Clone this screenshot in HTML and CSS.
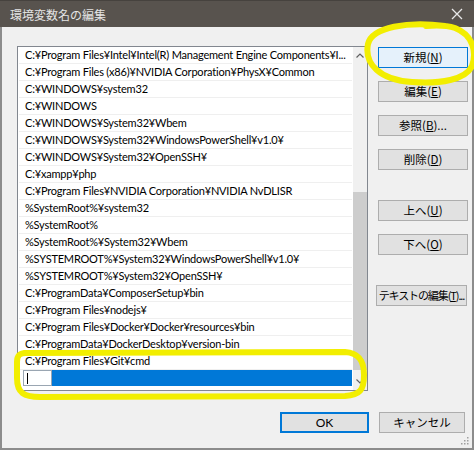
FILE: index.html
```html
<!DOCTYPE html>
<html lang="ja">
<head>
<meta charset="utf-8">
<title>環境変数名の編集</title>
<link rel="stylesheet" href="styles.css">
</head>
<body>
<div class="window">
  <div class="titlebar">
    <span class="title">環境変数名の編集</span>
    <svg class="close" width="12" height="12" viewBox="0 0 12 12"><path d="M1 1 L11 11 M11 1 L1 11" stroke="#e8e8e8" stroke-width="1.3" fill="none"/></svg>
  </div>
  <div class="content">
    <div class="main">
      <div class="listbox">
        <div class="rows">
          <div class="row">C:¥Program Files¥Intel¥Intel(R) Management Engine Components¥I...</div>
          <div class="row">C:¥Program Files (x86)¥NVIDIA Corporation¥PhysX¥Common</div>
          <div class="row">C:¥WINDOWS¥system32</div>
          <div class="row">C:¥WINDOWS</div>
          <div class="row">C:¥WINDOWS¥System32¥Wbem</div>
          <div class="row">C:¥WINDOWS¥System32¥WindowsPowerShell¥v1.0¥</div>
          <div class="row">C:¥WINDOWS¥System32¥OpenSSH¥</div>
          <div class="row">C:¥xampp¥php</div>
          <div class="row">C:¥Program Files¥NVIDIA Corporation¥NVIDIA NvDLISR</div>
          <div class="row">%SystemRoot%¥system32</div>
          <div class="row">%SystemRoot%</div>
          <div class="row">%SystemRoot%¥System32¥Wbem</div>
          <div class="row">%SYSTEMROOT%¥System32¥WindowsPowerShell¥v1.0¥</div>
          <div class="row">%SYSTEMROOT%¥System32¥OpenSSH¥</div>
          <div class="row">C:¥ProgramData¥ComposerSetup¥bin</div>
          <div class="row">C:¥Program Files¥nodejs¥</div>
          <div class="row">C:¥Program Files¥Docker¥Docker¥resources¥bin</div>
          <div class="row">C:¥ProgramData¥DockerDesktop¥version-bin</div>
          <div class="row">C:¥Program Files¥Git¥cmd</div>
          <div class="row selected"><span class="editbox"><span class="caret"></span></span></div>
        </div>
        <div class="scrollbar">
          <div class="arrow"><svg width="8" height="5" viewBox="0 0 8 5"><path d="M0.5 4.5 L4 1 L7.5 4.5" stroke="#606060" stroke-width="1.2" fill="none"/></svg></div>
          <div class="track"><div class="thumb"></div></div>
          <div class="arrow down"><svg width="8" height="5" viewBox="0 0 8 5"><path d="M0.5 0.5 L4 4 L7.5 0.5" stroke="#606060" stroke-width="1.2" fill="none"/></svg></div>
        </div>
      </div>
      <div class="side">
        <button class="btn focused">新規(<u>N</u>)</button>
        <button class="btn gap1">編集(<u>E</u>)</button>
        <button class="btn gap1">参照(<u>B</u>)...</button>
        <button class="btn gap1">削除(<u>D</u>)</button>
        <button class="btn gap2">上へ(<u>U</u>)</button>
        <button class="btn gap1">下へ(<u>O</u>)</button>
        <button class="btn gap3 wide">テキストの編集(<u>T</u>)...</button>
      </div>
    </div>
    <div class="footer">
      <button class="btn ok">OK</button>
      <button class="btn cancel">キャンセル</button>
    </div>
  </div>
  <svg class="grip" width="8" height="8" viewBox="0 0 8 8"><g fill="#a0a0a0"><rect x="6" y="0" width="1.5" height="1.5"/><rect x="3" y="3" width="1.5" height="1.5"/><rect x="6" y="3" width="1.5" height="1.5"/><rect x="0" y="6" width="1.5" height="1.5"/><rect x="3" y="6" width="1.5" height="1.5"/><rect x="6" y="6" width="1.5" height="1.5"/></g></svg>
  <svg class="marks" width="474" height="450" viewBox="0 0 474 450">
    <path d="M445 26 C408 21 372 27 368 44 C364 64 380 80 412 82 C440 84 466 80 472 66 C477 52 473 35 455 28 C446 25 436 25 426 26" stroke="#f2ee00" stroke-width="6" fill="none" stroke-linecap="round"/>
    <path d="M24 353 L345 352 C360 353 364 362 364 375 C364 390 360 395 345 396 L40 397 C24 397 17 393 17 378 L17 362 C17 355 20 353 26 353" stroke="#f2ee00" stroke-width="6" fill="none" stroke-linecap="round"/>
  </svg>
</div>
</body>
</html>
```

FILE: styles.css
```css
* { box-sizing: border-box; }
html, body { margin: 0; padding: 0; }
body {
  width: 474px;
  height: 450px;
  overflow: hidden;
  background: #f0f0f0;
  font-family: Lato, "Noto Sans CJK JP", sans-serif;
  font-size: 12px;
  color: #000;
}
.window {
  position: relative;
  width: 474px;
  height: 450px;
  background: #f0f0f0;
  border-left: 2px solid #8c8c8c;
  border-right: 2px solid #8c8c8c;
  border-bottom: 2px solid #8c8c8c;
  display: flex;
  flex-direction: column;
}
.titlebar {
  height: 27px;
  margin: 0 -2px;
  background: #58534e;
  border-top: 1px solid #46423e;
  display: flex;
  align-items: center;
  justify-content: space-between;
  padding: 0 11px 0 10px;
}
.title {
  color: #e4e4e4;
  font-family: "Noto Sans CJK JP", sans-serif;
  font-size: 12px;
}
.close { display: block; }
.content {
  padding: 19px 0 0 15px;
  display: flex;
  flex-direction: column;
}
.main {
  display: flex;
  gap: 10px;
}
.listbox {
  width: 351px;
  height: 345px;
  border: 1px solid #82878f;
  background: #fff;
  display: flex;
}
.rows {
  flex: 1;
  overflow: hidden;
}
.row {
  height: 17px;
  line-height: 16px;
  margin: 0 1px;
  padding-left: 6px;
  border-bottom: 1px solid #efefef;
  white-space: nowrap;
  overflow: hidden;
  font-size: 11px;
  letter-spacing: -0.2px;
}
.row.selected {
  margin-left: 5px;
  padding-left: 0;
  border-bottom: none;
  height: 16px;
  background: #0078d7;
  display: flex;
}
.editbox {
  width: 29px;
  height: 16px;
  background: #fff;
  border: 1px solid #9aa6b2;
  position: relative;
  display: block;
}
.caret {
  position: absolute;
  left: 3px;
  top: 2px;
  width: 1px;
  height: 11px;
  background: #000;
}
.scrollbar {
  width: 14px;
  background: #f0f0f0;
  display: flex;
  flex-direction: column;
}
.arrow {
  height: 17px;
  display: flex;
  align-items: center;
  justify-content: center;
}
.track { flex: 1; }
.thumb {
  margin-top: 128px;
  height: 178px;
  background: #cdcdcd;
}
.side {
  display: flex;
  flex-direction: column;
  padding-top: 1px;
}
.btn {
  width: 90px;
  height: 21px;
  background: #e1e1e1;
  border: 1px solid #adadad;
  font-family: "Noto Sans CJK JP", sans-serif;
  font-size: 11.5px;
  color: #000;
  padding: 0;
  line-height: 17px;
  text-align: center;
  white-space: nowrap;
}
.btn u { text-underline-offset: 1px; }
.btn.focused {
  background: #e5f1fb;
  border: 1px solid #0078d7;
}
.gap1 { margin-top: 13px; }
.gap2 { margin-top: 30px; }
.gap3 { margin-top: 30px; }
.wide {
  width: 91px;
  margin-left: -2px;
  font-size: 11px;
  letter-spacing: -1.1px;
}
.footer {
  display: flex;
  justify-content: flex-end;
  gap: 10px;
  margin-top: 21px;
  padding-right: 7px;
}
.ok {
  width: 89px;
  border: 2px solid #0078d7;
  font-family: Lato, sans-serif;
  font-size: 12px;
}
.cancel { width: 86px; }
.grip {
  position: absolute;
  right: 3px;
  bottom: 3px;
}
.marks {
  position: absolute;
  left: -2px;
  top: 0;
  pointer-events: none;
}
```
